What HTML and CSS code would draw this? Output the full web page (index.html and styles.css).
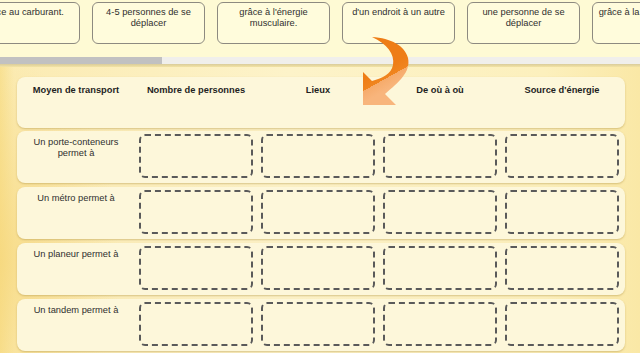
FILE: index.html
```html
<!DOCTYPE html>
<html lang="fr">
<head>
<meta charset="utf-8">
<link rel="stylesheet" href="styles.css">
</head>
<body>
<div class="page">
  <div class="bank">
    <div class="cards">
      <div class="card">grâce au carburant.</div>
      <div class="card">4-5 personnes de se déplacer</div>
      <div class="card">grâce à l'énergie musculaire.</div>
      <div class="card">d'un endroit à un autre</div>
      <div class="card">une personne de se déplacer</div>
      <div class="card">grâce à la force du vent.</div>
    </div>
  </div>
  <div class="scrollbar"><div class="thumb"></div></div>
  <div class="shade"></div>
  <div class="board">
    <div class="head grid">
      <div class="hcell">Moyen de transport</div>
      <div class="hcell">Nombre de personnes</div>
      <div class="hcell">Lieux</div>
      <div class="hcell">De où à où</div>
      <div class="hcell">Source d'énergie</div>
    </div>
    <div class="row grid">
      <div class="label">Un porte-conteneurs permet à</div>
      <div class="drop"></div><div class="drop"></div><div class="drop"></div><div class="drop"></div>
    </div>
    <div class="row grid">
      <div class="label">Un métro permet à</div>
      <div class="drop"></div><div class="drop"></div><div class="drop"></div><div class="drop"></div>
    </div>
    <div class="row grid">
      <div class="label">Un planeur permet à</div>
      <div class="drop"></div><div class="drop"></div><div class="drop"></div><div class="drop"></div>
    </div>
    <div class="row grid">
      <div class="label">Un tandem permet à</div>
      <div class="drop"></div><div class="drop"></div><div class="drop"></div><div class="drop"></div>
    </div>
  </div>
  <svg class="arrow" width="60" height="80" viewBox="0 0 60 80">
    <defs>
      <linearGradient id="ag" gradientUnits="userSpaceOnUse" x1="25" y1="40" x2="35" y2="58">
        <stop offset="0" stop-color="#ee7d16"/>
        <stop offset="0.5" stop-color="#f0851f"/>
        <stop offset="0.5" stop-color="#f6ab6b"/>
        <stop offset="1" stop-color="#f8b57c"/>
      </linearGradient>
    </defs>
    <path fill="url(#ag)" d="M8 42 L8 75 L41 75 L30 64 C44 52 56 42 53 28 C50 16 36 8 17 7 C32 14 40 24 38 35 C36 44 28 48 17 51 Z"/>
  </svg>
</div>
</body>
</html>
```
FILE: styles.css
```css
* { box-sizing: border-box; }
html, body { margin: 0; padding: 0; }
body {
  width: 640px;
  height: 353px;
  overflow: hidden;
  font-family: "Liberation Sans", Arial, sans-serif;
  color: #2b2b2b;
}
.page {
  position: relative;
  width: 640px;
  height: 353px;
  overflow: hidden;
  background:
    radial-gradient(ellipse 120px 200px at 0 260px, rgba(246, 214, 120, 0.7), rgba(246, 214, 120, 0) 100%),
    linear-gradient(90deg, #f8e193 0, #fbebb3 14px, #fdf3c9 45%, #fcf0bd 85%, #fae8a6 100%);
}
.bank {
  height: 57px;
  background: #fefad4;
  overflow: hidden;
}
.cards {
  display: flex;
  gap: 12px;
  margin-left: -33px;
  padding-top: 2px;
}
.card {
  flex: 0 0 113px;
  height: 42px;
  border: 1px solid #8d8a80;
  border-radius: 6px;
  background: #fffcdc;
  font-size: 9.3px;
  line-height: 10.6px;
  text-align: center;
  padding: 4px 4px 0;
  color: #2f2f2f;
}
.scrollbar {
  height: 7px;
  background: #f0efeb;
}
.thumb {
  width: 162px;
  height: 7px;
  background: #c1c1c1;
}
.shade {
  height: 3px;
  background: linear-gradient(#d9cc9b, #f3e3a4);
}
.board {
  padding: 10px 0 0 17px;
  display: flex;
  flex-direction: column;
  gap: 4px;
}
.grid {
  width: 608px;
  display: grid;
  grid-template-columns: repeat(5, 114px);
  column-gap: 8px;
  border-radius: 8px;
  background: #fdf7da;
  box-shadow: 0 1px 2px rgba(170, 140, 60, 0.45);
}
.head {
  height: 51px;
  margin-bottom: -1px;
  padding-top: 8px;
}
.hcell {
  font-size: 9.3px;
  font-weight: bold;
  line-height: 11px;
  text-align: center;
  color: #1f1f1f;
}
.hcell:first-child { padding-left: 4px; }
.row {
  height: 52px;
  padding-top: 3px;
}
.label {
  font-size: 9.3px;
  line-height: 11px;
  text-align: center;
  padding: 3px 0 0 4px;
  color: #2f2f2f;
}
.drop {
  height: 44px;
  border: 2px dashed #5a5a5a;
  border-radius: 6px;
}
.arrow {
  position: absolute;
  left: 355px;
  top: 30px;
}
```
